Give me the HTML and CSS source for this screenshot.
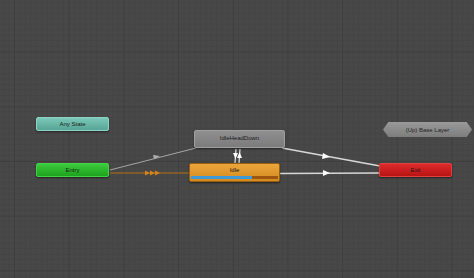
FILE: index.html
```html
<!DOCTYPE html>
<html lang="en">
<head>
    <meta charset="UTF-8">
    <title>Animator - Base Layer</title>
    <link rel="stylesheet" href="styles.css">
</head>
<body>
    <div class="graph">
        <svg class="edges" width="474" height="278" viewBox="0 0 474 278">
            <!-- Entry -> IdleHeadDown -->
            <line x1="110" y1="170" x2="196" y2="148" class="edge grey"/>
            <polygon points="160,156 153,155 154,159" class="arrow grey"/>
            <!-- Entry -> Idle (default) -->
            <line x1="110" y1="173" x2="189" y2="173" class="edge orange"/>
            <polygon points="150,173 145,170.5 145,175.5" class="arrow orange"/>
            <polygon points="155,173 150,170.5 150,175.5" class="arrow orange"/>
            <polygon points="160,173 155,170.5 155,175.5" class="arrow orange"/>
            <line x1="180" y1="188" x2="240" y2="188" class="edge faint"/>
            <!-- IdleHeadDown <-> Idle -->
            <line x1="236" y1="149" x2="235" y2="163" class="edge white"/>
            <line x1="240" y1="149" x2="239" y2="163" class="edge white"/>
            <polygon points="235.5,159 233,153 238,153" class="arrow white"/>
            <polygon points="239.5,152 237,158 242,158" class="arrow white"/>
            <!-- IdleHeadDown -> Exit -->
            <line x1="282" y1="148" x2="380" y2="166" class="edge white"/>
            <polygon points="330,157 323,153 322,159" class="arrow white"/>
            <!-- Idle -> Exit -->
            <line x1="280" y1="173.5" x2="380" y2="173" class="edge white"/>
            <polygon points="330,173 323,170 323,176" class="arrow white"/>
        </svg>

        <div class="node any-state">Any State</div>
        <div class="node entry">Entry</div>
        <div class="node head-down">IdleHeadDown</div>
        <div class="node idle">
            <span>Idle</span>
            <div class="progress"><div class="progress-fill" style="width: 70%"></div></div>
        </div>
        <div class="node exit">Exit</div>
        <div class="layer-tab">(Up) Base Layer</div>
    </div>
</body>
</html>
```

FILE: styles.css
```css
/* Animator graph view */
body {
    margin: 0;
    padding: 0;
    font-family: "Liberation Sans", Arial, sans-serif;
    background-color: #474747;
    overflow: hidden;
}

.graph {
    position: relative;
    width: 474px;
    height: 278px;
    background-color: #484848;
    background-image:
        linear-gradient(to right, #3f3f3f 1px, transparent 1px),
        linear-gradient(to bottom, #3f3f3f 1px, transparent 1px),
        linear-gradient(to right, #444444 1px, transparent 1px),
        linear-gradient(to bottom, #444444 1px, transparent 1px);
    background-size: 54.7px 54.7px, 54.7px 54.7px, 5.47px 5.47px, 5.47px 5.47px;
    background-position: 14px -3px, 14px -3px, 3px 2px, 3px 2px;
}

.edges {
    position: absolute;
    left: 0;
    top: 0;
}

.edge {
    stroke-width: 1;
}

.edge.grey { stroke: #a5a5a5; }
.edge.white { stroke: #d8d8d8; stroke-width: 1.3; }
.edge.orange { stroke: #b86e12; }
.edge.faint { stroke: #554836; }

.arrow.grey { fill: #b0b0b0; }
.arrow.white { fill: #ffffff; }
.arrow.orange { fill: #d4841c; }

.node {
    position: absolute;
    display: flex;
    align-items: center;
    justify-content: center;
    font-size: 6px;
    color: #1a1a1a;
    border-radius: 2px;
    box-shadow: 0 1px 2px rgba(0, 0, 0, 0.5);
    box-sizing: border-box;
}

.any-state {
    left: 36px;
    top: 117px;
    width: 73px;
    height: 14px;
    background: linear-gradient(to bottom, #7bc8b8, #56a596);
    border: 1px solid #8ed4c6;
}

.entry {
    left: 36px;
    top: 163px;
    width: 73px;
    height: 14px;
    background: linear-gradient(to bottom, #3ccb3c, #1ea21e);
    border: 1px solid #46d046;
}

.head-down {
    left: 194px;
    top: 130px;
    width: 91px;
    height: 18px;
    align-items: flex-start;
    padding-top: 4px;
    background: linear-gradient(to bottom, #8f8f8f, #7c7c7c);
    border: 1px solid #a0a0a0;
}

.idle {
    left: 189px;
    top: 163px;
    width: 91px;
    height: 19px;
    flex-direction: column;
    justify-content: flex-start;
    padding-top: 3px;
    background: linear-gradient(to bottom, #eba63c, #d48a1e);
    border: 1px solid #9a5e10;
}

.progress {
    width: 87px;
    height: 3px;
    margin-top: 3px;
    background-color: #9c560e;
}

.progress-fill {
    height: 100%;
    background-color: #3d9ad6;
}

.exit {
    left: 379px;
    top: 163px;
    width: 73px;
    height: 14px;
    background: linear-gradient(to bottom, #de2a2a, #b81414);
    border: 1px solid #e04040;
}

.layer-tab {
    position: absolute;
    left: 383px;
    top: 122px;
    width: 89px;
    height: 15px;
    display: flex;
    align-items: center;
    justify-content: center;
    font-size: 6px;
    color: #1f1f1f;
    background: linear-gradient(to bottom, #9a9a9a, #7d7d7d);
    clip-path: polygon(6% 0, 94% 0, 100% 50%, 94% 100%, 6% 100%, 0 50%);
}
```
